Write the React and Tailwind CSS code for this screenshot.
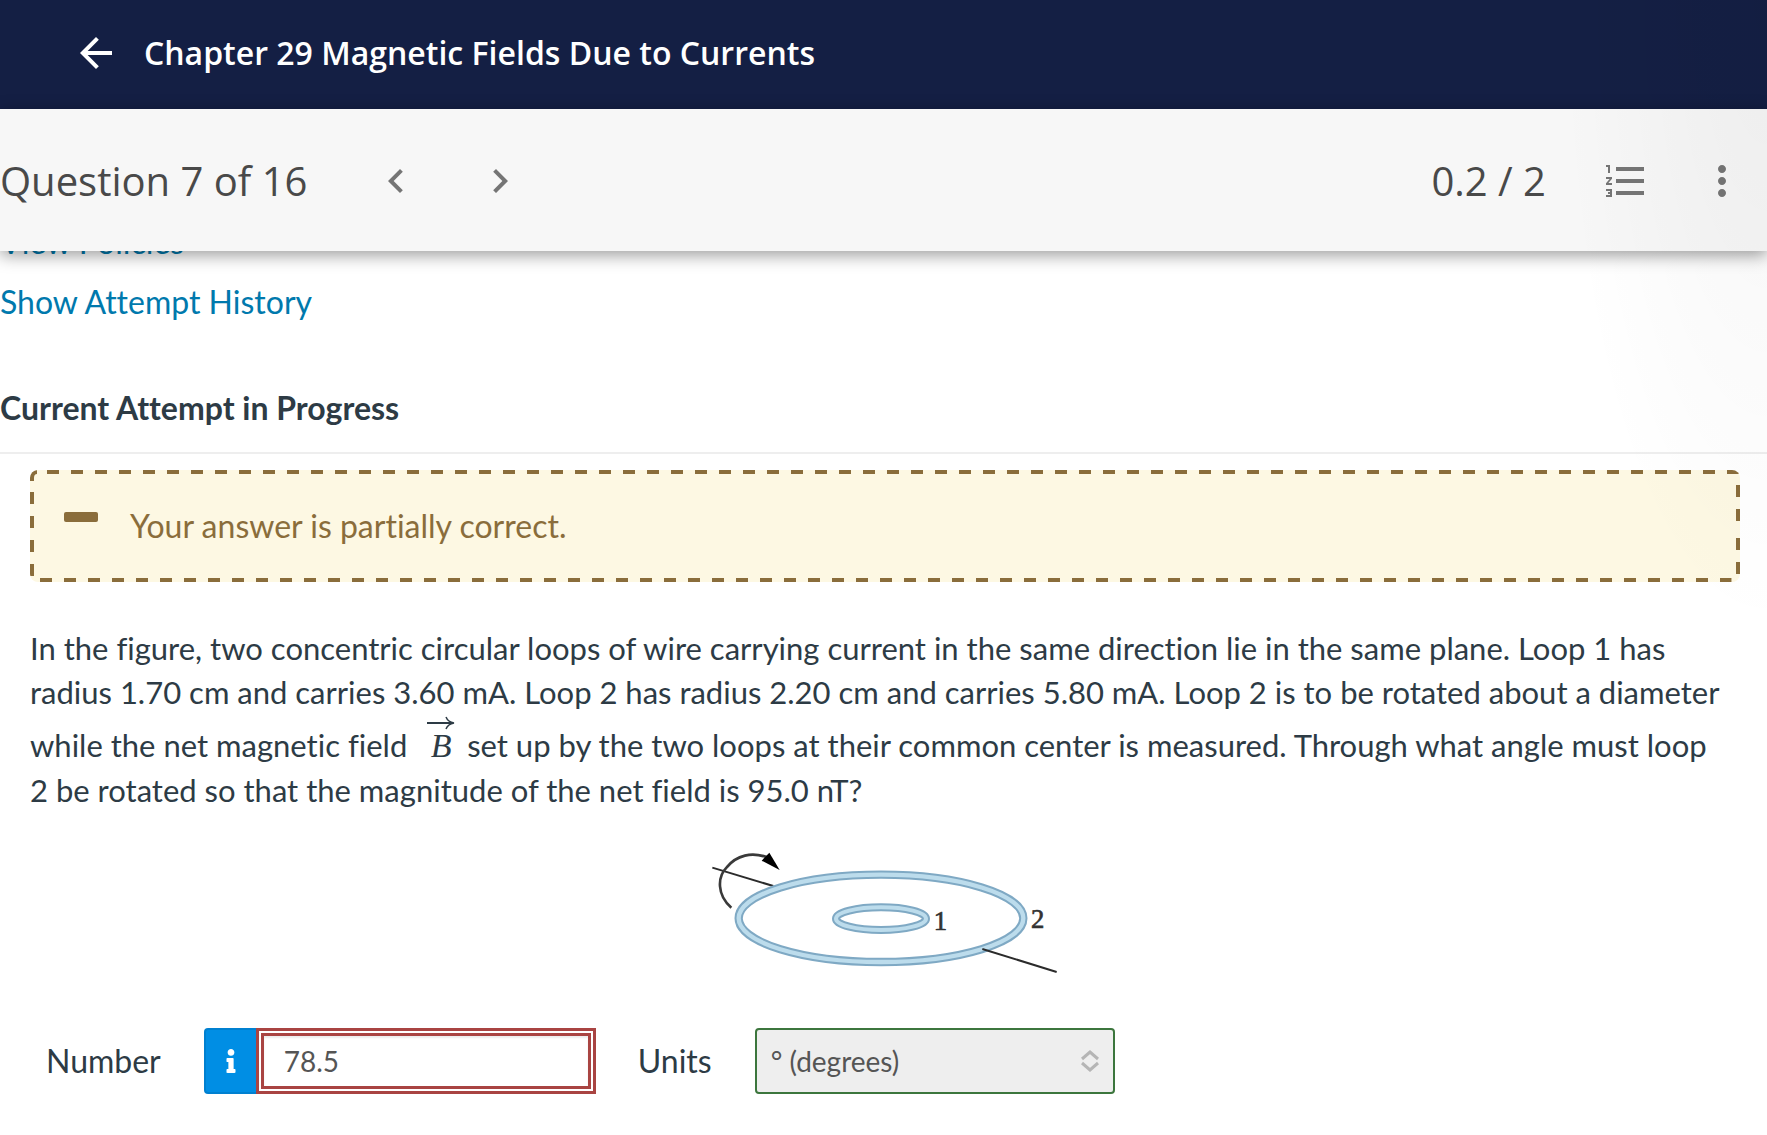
import React, { useState } from 'react';
import { MdArrowBack, MdChevronLeft, MdChevronRight, MdFormatListNumbered, MdMoreVert } from 'react-icons/md';
import { FaInfo } from 'react-icons/fa';

const Header = () => (
    <header className="flex items-center h-[109px] pb-1 pl-[72px] bg-[#141f44] text-white">
        <button type="button" aria-label="Back">
            <MdArrowBack className="size-12" />
        </button>
        <h1 className="ml-6 font-['Open_Sans','Noto_Sans',sans-serif] text-[32px] leading-[44px] font-semibold">
            Chapter 29 Magnetic Fields Due to Currents
        </h1>
    </header>
);

const Toolbar = () => (
    <div className="relative z-10 flex items-center justify-between h-[142px] pt-0.5 pr-[21px] bg-[#f7f7f7] text-[#757575] font-['Open_Sans','Noto_Sans',sans-serif] shadow-[0_4px_16px_rgba(0,0,0,0.4)]">
        <div className="flex items-center">
            <h2 className="text-[40px] leading-[56px] text-[#494949]">Question 7 of 16</h2>
            <div className="flex gap-14 ml-[65px]">
                <button type="button" aria-label="Previous question">
                    <MdChevronLeft className="size-12" />
                </button>
                <button type="button" aria-label="Next question">
                    <MdChevronRight className="size-12" />
                </button>
            </div>
        </div>
        <div className="flex items-center">
            <span className="text-[40px] leading-[56px] text-[#494949]">0.2 / 2</span>
            <button type="button" aria-label="Question list" className="ml-14">
                <MdFormatListNumbered className="size-12" />
            </button>
            <button type="button" aria-label="More options" className="ml-12">
                <MdMoreVert className="size-12" />
            </button>
        </div>
    </div>
);

// Dashed outline with 12px dashes, longer than what border-dashed gives
const DashedOutline = () => (
    <svg className="absolute inset-0 w-full h-full" stroke="#8a6d3b" strokeWidth="4" strokeDasharray="12 12" aria-hidden="true">
        <line x1="17" y1="2" x2="100%" y2="2" />
        <line x1="10" y1="110" x2="99.5%" y2="110" />
        <line x1="2" y1="22" x2="2" y2="107" />
        <line x1="1708" y1="15" x2="1708" y2="56" />
        <line x1="1708" y1="68" x2="1708" y2="108" />
        <path d="M2 11V8Q2 2 7 2" fill="none" strokeDasharray="none" />
    </svg>
);

const Alert = () => (
    <div role="alert" className="relative flex items-start gap-8 px-[34px] py-[34px] rounded-lg overflow-hidden bg-[#fdf8e3] text-[#8a6d3b]">
        <DashedOutline />
        <span className="mt-2 w-[34px] h-2.5 rounded-xs bg-[#8a6d3b]" />
        <p>Your answer is partially correct.</p>
    </div>
);

const VectorB = () => (
    <span className="relative inline-block ml-3 mr-1 pt-2.5 w-7 text-center font-['Liberation_Serif',serif] text-[34px] italic">
        <svg className="absolute top-0.5 left-0 w-7 h-3.5" viewBox="0 0 28 14" fill="none" stroke="currentColor" strokeWidth="2" aria-hidden="true">
            <path d="M0 7H26" />
            <path d="M19 1Q21 6 27 7Q21 8 19 13" strokeWidth="1.5" />
        </svg>
        B
    </span>
);

const LoopsFigure = () => (
    <svg className="mx-auto w-[400px] h-[180px]" viewBox="15 0 1200 540" fill="none" role="img" aria-label="Two concentric current loops">
        <path d="M97 143L280 198" stroke="#2b2b2b" strokeWidth="6" />
        <path d="M154 263C110 225 112 170 140 142C170 105 215 95 262 112" stroke="#3a3a3a" strokeWidth="8" />
        <path d="M299 150L245 122L268 98Z" fill="#000" />
        <ellipse cx="603" cy="295" rx="427" ry="131" stroke="#7fa9c4" strokeWidth="25" />
        <ellipse cx="603" cy="295" rx="427" ry="131" stroke="#bcdcec" strokeWidth="13" />
        <ellipse cx="603" cy="296" rx="135" ry="34" stroke="#7fa9c4" strokeWidth="24" />
        <ellipse cx="603" cy="296" rx="135" ry="34" stroke="#bcdcec" strokeWidth="12" />
        <path d="M907 387L1130 456" stroke="#2b2b2b" strokeWidth="6" />
        <g className="font-['Liberation_Serif',serif] text-[80px]" fill="#333" stroke="#333" strokeWidth="2">
            <text x="761" y="329">1</text>
            <text x="1053" y="325">2</text>
        </g>
    </svg>
);

const AnswerRow = () => {
    const [value, setValue] = useState('78.5');

    return (
        <form className="flex items-center mt-7 pl-4">
            <label htmlFor="answer">Number</label>
            <div className="flex ml-[43px] w-[392px] h-[66px]">
                <button type="button" aria-label="Show hint" className="flex items-center justify-center w-[52px] rounded-l border-2 border-r-0 border-[#0080d0] bg-[#008ee4] text-white">
                    <FaInfo className="size-6" />
                </button>
                <input
                    id="answer"
                    value={value}
                    onChange={e => setValue(e.target.value)}
                    className="flex-1 min-w-0 px-5 border-8 border-double border-[#a94442] bg-white text-[28px] text-[#555] shadow-[inset_0_2px_2px_rgba(0,0,0,0.075)]"
                />
            </div>
            <label htmlFor="units" className="ml-[42px]">Units</label>
            <div className="relative ml-[43px] w-[360px] h-[66px]">
                <select id="units" className="appearance-none w-full h-full pl-3.5 pr-12 rounded border-2 border-[#3c763d] bg-[#eee] text-[28px] text-[#555]">
                    <option>° (degrees)</option>
                </select>
                <svg className="absolute top-[22px] right-4 w-[18px] h-[22px] pointer-events-none" viewBox="0 0 18 22" fill="none" stroke="#b5b5b5" strokeWidth="3" aria-hidden="true">
                    <path d="M1 9L9 2L17 9M1 13L9 20L17 13" />
                </svg>
            </div>
        </form>
    );
};

export default function App() {
    return (
        <div className="relative min-h-screen overflow-hidden bg-white font-['Lato',sans-serif] text-[32px] leading-[44px] text-[#2d3b45] [font-variant-ligatures:none]">
            <Header />
            <Toolbar />
            <main className="-mt-[31px]">
                <nav className="flex flex-col items-start gap-4 text-[#0079ad]">
                    <a href="#policies">View Policies</a>
                    <a href="#history">Show Attempt History</a>
                </nav>
                <h3 className="mt-[62px] pb-[22px] border-b-2 border-[#eee] font-bold">Current Attempt in Progress</h3>
                <section className="mt-4 pl-[30px] pr-[27px]">
                    <Alert />
                    <p className="mt-11 mb-2 text-[31px]">
                        In the figure, two concentric circular loops of wire carrying current in the same direction lie in the same plane. Loop 1 has radius 1.70 cm and carries 3.60 mA. Loop 2 has radius 2.20 cm and carries 5.80 mA. Loop 2 is to be rotated about a diameter while the net magnetic field <VectorB /> set up by the two loops at their common center is measured. Through what angle must loop 2&nbsp;be rotated so that the magnitude of the net field is 95.0 nT?
                    </p>
                    <LoopsFigure />
                    <AnswerRow />
                </section>
            </main>
            {/* Soft shade along the right edge */}
            <div className="absolute top-0 right-0 z-20 w-52 h-[640px] pointer-events-none bg-[radial-gradient(farthest-side_at_top_right,rgba(0,0,0,0.04),transparent)]" />
        </div>
    );
}
